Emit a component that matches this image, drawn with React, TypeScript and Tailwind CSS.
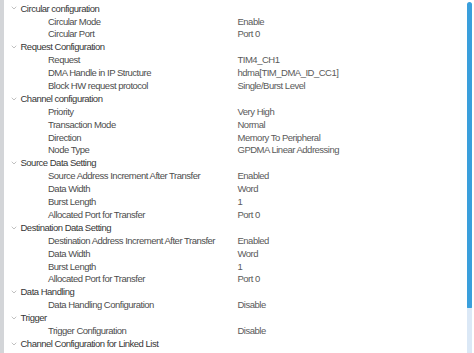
import { ChevronDown } from 'lucide-react';

type Item = { label: string; value: string };
type Group = { title: string; items: Item[] };

const groups: Group[] = [
  {
    title: 'Circular configuration',
    items: [
      { label: 'Circular Mode', value: 'Enable' },
      { label: 'Circular Port', value: 'Port 0' },
    ],
  },
  {
    title: 'Request Configuration',
    items: [
      { label: 'Request', value: 'TIM4_CH1' },
      { label: 'DMA Handle in IP Structure', value: 'hdma[TIM_DMA_ID_CC1]' },
      { label: 'Block HW request protocol', value: 'Single/Burst Level' },
    ],
  },
  {
    title: 'Channel configuration',
    items: [
      { label: 'Priority', value: 'Very High' },
      { label: 'Transaction Mode', value: 'Normal' },
      { label: 'Direction', value: 'Memory To Peripheral' },
      { label: 'Node Type', value: 'GPDMA Linear Addressing' },
    ],
  },
  {
    title: 'Source Data Setting',
    items: [
      { label: 'Source Address Increment After Transfer', value: 'Enabled' },
      { label: 'Data Width', value: 'Word' },
      { label: 'Burst Length', value: '1' },
      { label: 'Allocated Port for Transfer', value: 'Port 0' },
    ],
  },
  {
    title: 'Destination Data Setting',
    items: [
      { label: 'Destination Address Increment After Transfer', value: 'Enabled' },
      { label: 'Data Width', value: 'Word' },
      { label: 'Burst Length', value: '1' },
      { label: 'Allocated Port for Transfer', value: 'Port 0' },
    ],
  },
  {
    title: 'Data Handling',
    items: [{ label: 'Data Handling Configuration', value: 'Disable' }],
  },
  {
    title: 'Trigger',
    items: [{ label: 'Trigger Configuration', value: 'Disable' }],
  },
  {
    title: 'Channel Configuration for Linked List',
    items: [],
  },
];

export default function App() {
  return (
    <div
      className="flex w-[474px] h-[353px] overflow-hidden bg-white text-[9.5px] tracking-[-0.5px] leading-none"
      style={{ fontFamily: '"Liberation Sans", Arial, sans-serif' }}
    >
      <div className="w-[4px] shrink-0 bg-[#d3d5d8]" />

      <div className="flex-1 pt-[2px]">
        {groups.map((g) => (
          <div key={g.title}>
            <div className="h-[12.9px] flex items-center">
              <ChevronDown className="w-[8px] h-[8px] ml-[6px] mr-[2.5px] text-[#8a8a8a]" strokeWidth={1.6} />
              <span className="text-[#363636]">{g.title}</span>
            </div>
            {g.items.map((it) => (
              <div key={g.title + it.label} className="h-[12.9px] flex items-center pl-[44px]">
                <span className="w-[189.5px] shrink-0 text-[#4d4d4d]">{it.label}</span>
                <span className="text-[#5a5a5a]">{it.value}</span>
              </div>
            ))}
          </div>
        ))}
      </div>

      <div className="w-[5px] shrink-0 mr-[2px] pt-[2px] flex flex-col">
        <div className="h-[306px] rounded-t-[3px] rounded-b-[1px] bg-[#3a9fdc]" />
        <div className="flex-1 bg-[#dbe8f6]" />
      </div>
    </div>
  );
}
